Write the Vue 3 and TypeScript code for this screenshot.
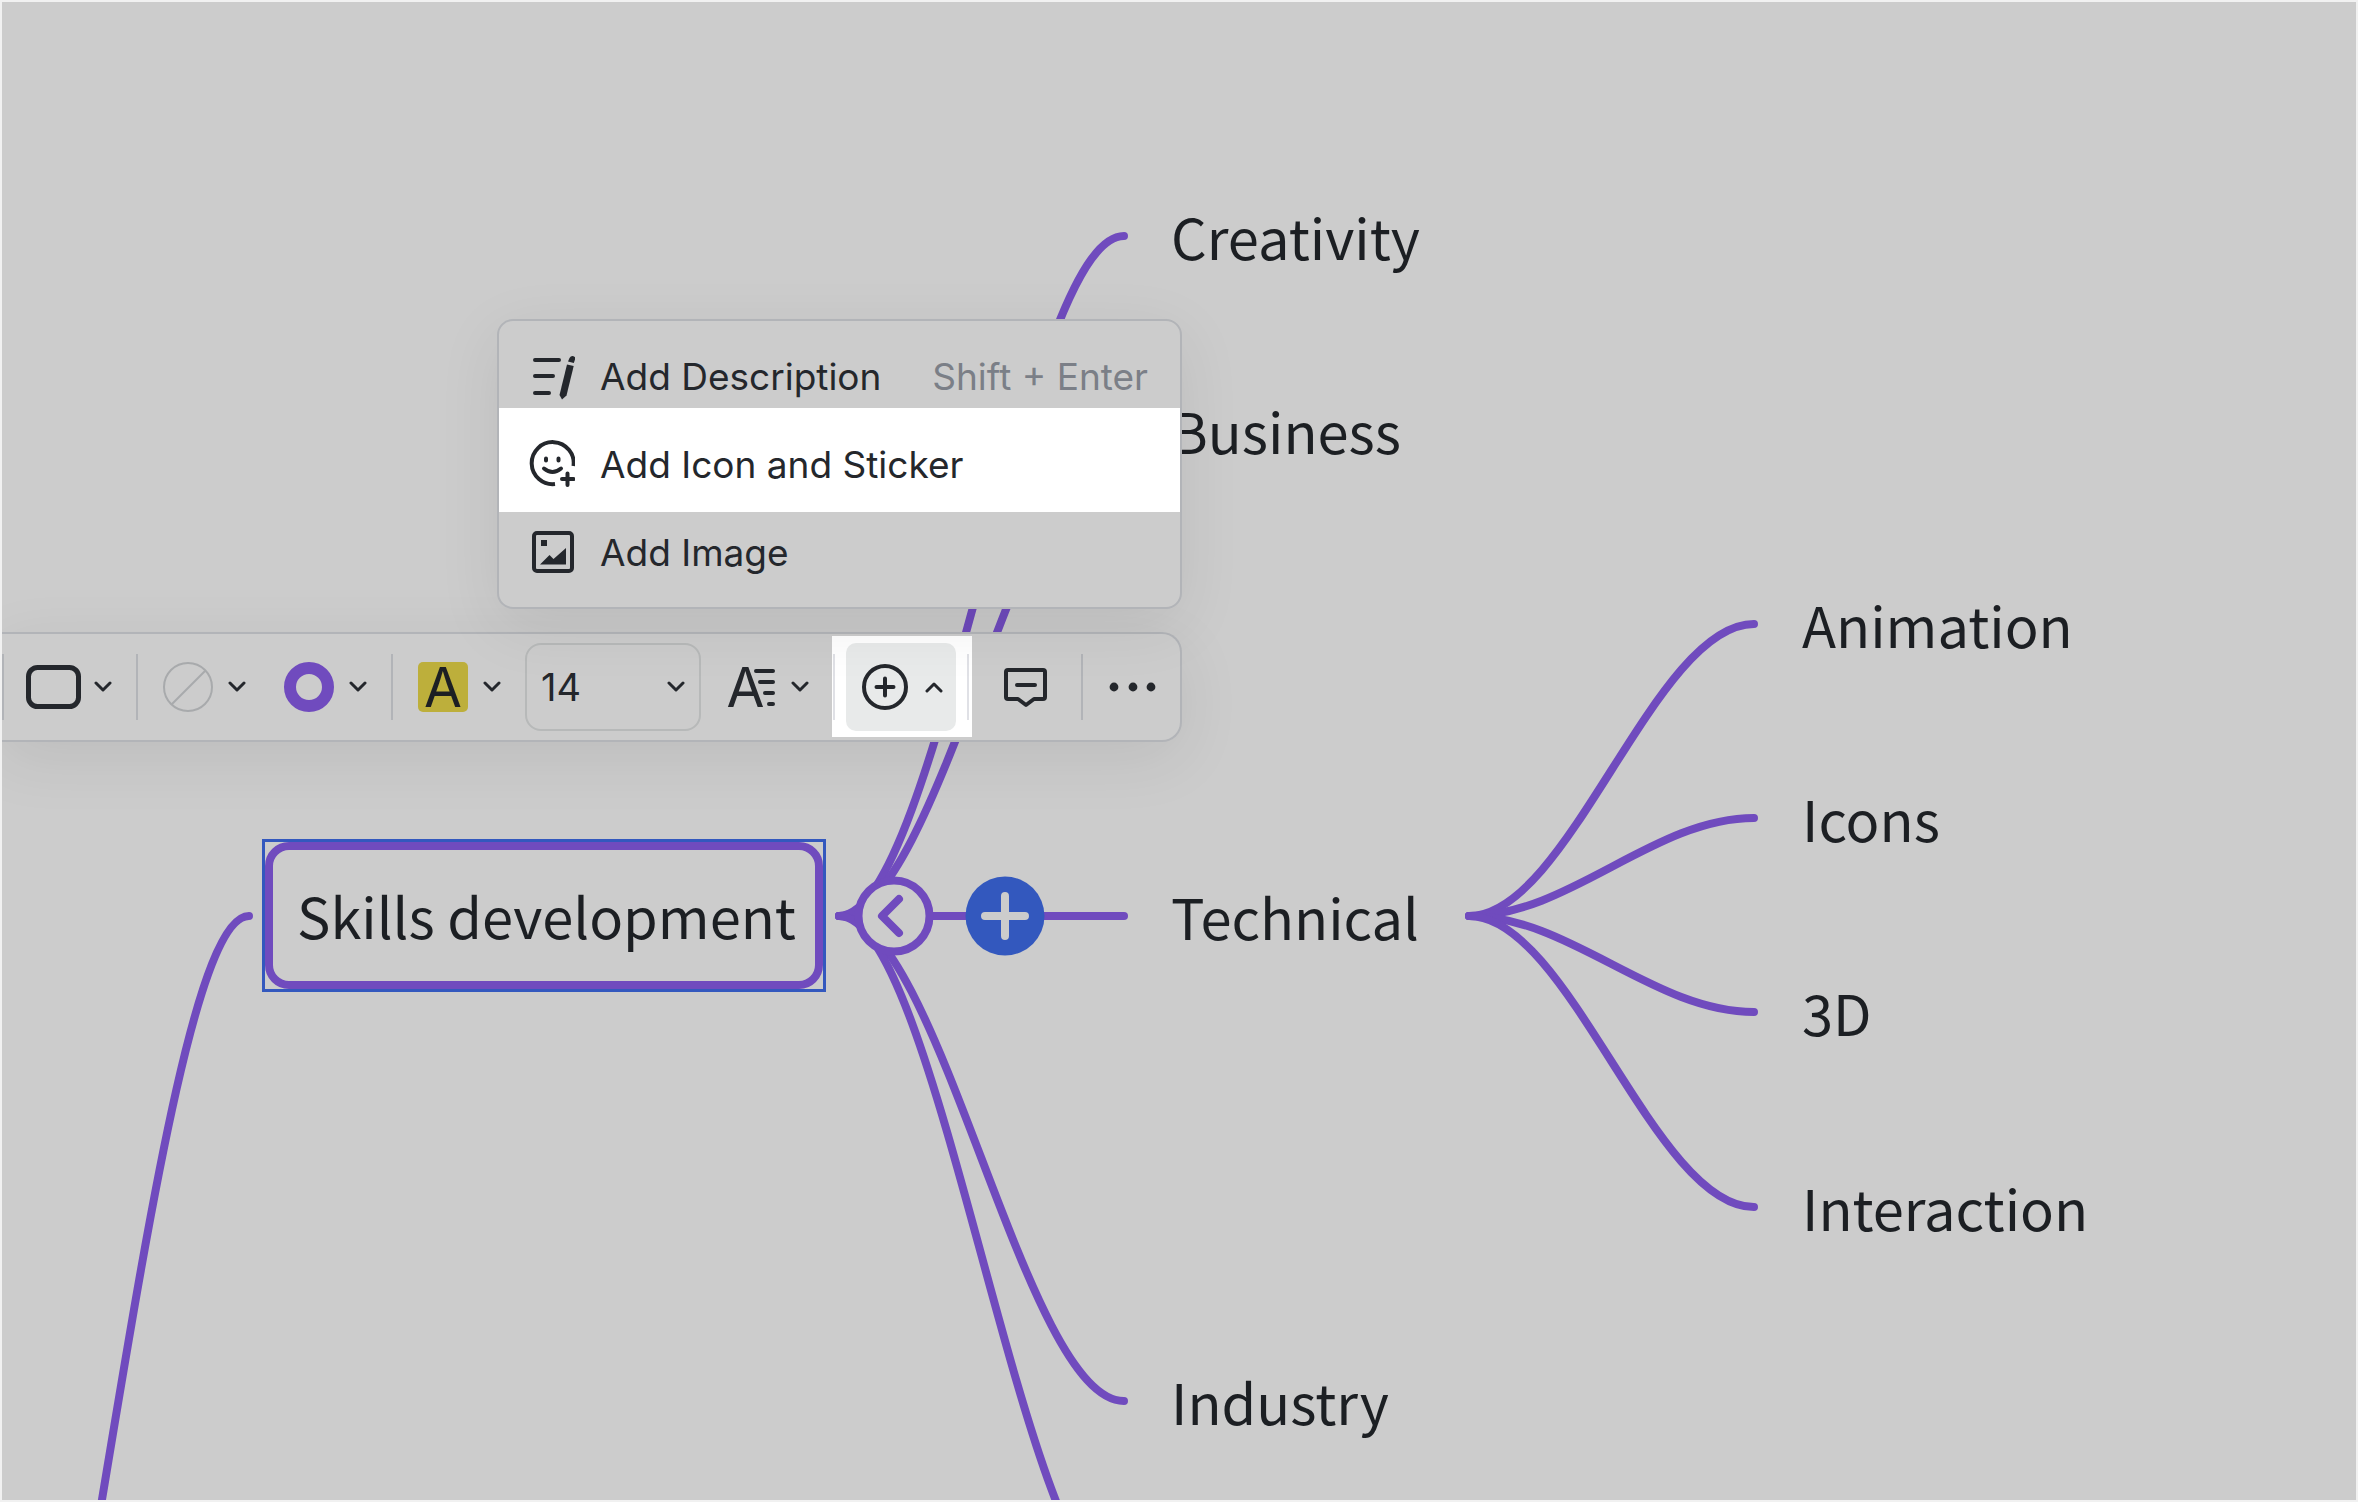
<script setup lang="ts">
import { ref } from 'vue'

interface Topic {
  label: string
  x: number
  y: number
}

interface Link {
  from: [number, number]
  to: [number, number]
}

const topics: Topic[] = [
  { label: 'Creativity', x: 1171, y: 236 },
  { label: 'Business', x: 1171, y: 430 },
  { label: 'Technical', x: 1171, y: 916 },
  { label: 'Industry', x: 1171, y: 1401 },
  { label: 'Animation', x: 1802, y: 624 },
  { label: 'Icons', x: 1802, y: 818 },
  { label: '3D', x: 1802, y: 1012 },
  { label: 'Interaction', x: 1802, y: 1207 },
]

const links: Link[] = [
  { from: [-36, 2029], to: [249, 916] },
  { from: [839, 916], to: [1124, 236] },
  { from: [839, 916], to: [1124, 430] },
  { from: [839, 916], to: [1124, 916] },
  { from: [839, 916], to: [1124, 1401] },
  { from: [839, 916], to: [1124, 1595] },
  { from: [1469, 916], to: [1754, 624] },
  { from: [1469, 916], to: [1754, 818] },
  { from: [1469, 916], to: [1754, 1012] },
  { from: [1469, 916], to: [1754, 1207] },
]

function curve({ from, to }: Link): string {
  const bend = Math.round((to[0] - from[0]) * 0.35)
  return `M${from[0]} ${from[1]}C${from[0] + bend} ${from[1]} ${to[0] - bend} ${to[1]} ${to[0]} ${to[1]}`
}

const fontSize = ref('14')
</script>

<template>
  <main class="canvas">
    <svg class="links" aria-hidden="true">
      <path v-for="(link, i) in links" :key="i" :d="curve(link)" />
    </svg>

    <div
      v-for="topic in topics"
      :key="topic.label"
      class="topic"
      :style="{ left: topic.x + 'px', top: topic.y + 'px' }"
    >
      <span>{{ topic.label }}</span>
    </div>

    <div class="selected"><div class="root">Skills development</div></div>

    <button class="round collapse" aria-label="Collapse branch">
      <svg width="80" height="80" viewBox="0 0 80 80">
        <circle cx="40" cy="40" r="35.5" />
        <path d="M45 23 28 40l17 17" />
      </svg>
    </button>
    <button class="round add" aria-label="Add topic">
      <svg width="80" height="80" viewBox="0 0 80 80">
        <circle cx="40" cy="40" r="39.5" />
        <path d="M20 40h40M40 20v40" />
      </svg>
    </button>

    <div class="toolbar" role="toolbar" aria-label="Topic style">
      <i class="divider"></i>
      <button class="tool" aria-label="Shape">
        <svg class="icon" viewBox="0 0 56 50"><rect x="2.5" y="5.500" width="50" height="39" rx="9" stroke-width="5" /></svg>
        <svg class="chevron" viewBox="0 0 18 12"><path d="m2 2 7 7 7-7" /></svg>
      </button>
      <i class="divider"></i>
      <button class="tool" aria-label="Fill">
        <svg class="icon faint" viewBox="0 0 56 50"><circle cx="28" cy="25" r="24" /><path d="M12 42 45 9" /></svg>
        <svg class="chevron" viewBox="0 0 18 12"><path d="m2 2 7 7 7-7" /></svg>
      </button>
      <button class="tool" aria-label="Border colour">
        <svg class="icon violet" viewBox="0 0 56 50"><circle cx="28" cy="25" r="19" /></svg>
        <svg class="chevron" viewBox="0 0 18 12"><path d="m2 2 7 7 7-7" /></svg>
      </button>
      <i class="divider"></i>
      <button class="tool" aria-label="Text colour">
        <span class="icon"><span class="swatch">A</span></span>
        <svg class="chevron" viewBox="0 0 18 12"><path d="m2 2 7 7 7-7" /></svg>
      </button>
      <label class="size">
        <select v-model="fontSize" aria-label="Font size">
          <option>12</option>
          <option>14</option>
          <option>16</option>
        </select>
        <svg class="chevron" viewBox="0 0 18 12"><path d="m2 2 7 7 7-7" /></svg>
      </label>
      <button class="tool" aria-label="Text format">
        <span class="icon format">
          <span class="letter">A</span>
          <svg width="22" height="38" viewBox="0 0 22 38"><path d="M3 3h17M7 14h13M12 25h8M16 36h4" /></svg>
        </span>
        <svg class="chevron" viewBox="0 0 18 12"><path d="m2 2 7 7 7-7" /></svg>
      </button>
      <div class="insert">
        <i class="divider"></i>
        <button class="tool open" aria-label="Insert" aria-expanded="true">
          <svg class="icon" viewBox="0 0 56 50"><circle cx="28" cy="25" r="21" /><path d="M19.500 25h17M28 16.500v17" /></svg>
          <svg class="chevron" viewBox="0 0 18 12"><path d="m2 10 7-7 7 7" /></svg>
        </button>
        <i class="divider"></i>
      </div>
      <button class="tool wide" aria-label="Comment">
        <svg class="icon" viewBox="0 0 56 50">
          <path d="M11 8h35a2 2 0 0 1 2 2v25a2 2 0 0 1-2 2h-9l-8 6-8-6h-10a2 2 0 0 1-2-2V10a2 2 0 0 1 2-2zM20 23h18" />
        </svg>
      </button>
      <i class="divider"></i>
      <button class="tool last" aria-label="More">
        <svg class="icon dots" viewBox="0 0 56 50">
          <circle cx="9" cy="25" r="4.4" /><circle cx="28" cy="25" r="4.4" /><circle cx="46" cy="25" r="4.4" />
        </svg>
      </button>
    </div>

    <div class="menu" role="menu">
      <button class="item" role="menuitem">
        <svg width="48" height="48" viewBox="0 0 48 48">
          <path d="M8 8h24M8 24h18M8 41h14" />
          <path class="solid" d="M40 12.500 46.700 14 39.500 43.500 35 47.500 32.500 43z" />
          <path class="solid" d="M41 9.500 42.500 6q1.500-2.500 4-1.800t1.500 3.300L46.800 11z" />
        </svg>
        <span>Add Description</span>
        <kbd>Shift + Enter</kbd>
      </button>
      <button class="item spotlit" role="menuitem">
        <svg width="48" height="48" viewBox="0 0 48 48">
          <path class="butt" d="M46.500 26A21 21 0 1 0 28 44" />
          <path d="M40.500 33.500v11.500M35 39h11.500" />
          <path d="M19 18.500v2M31.500 18.500v2M17 28.500q8.500 7 17 0" />
        </svg>
        <span>Add Icon and Sticker</span>
      </button>
      <button class="item" role="menuitem">
        <svg width="48" height="48" viewBox="0 0 48 48">
          <rect x="7" y="5" width="38" height="38" rx="3" />
          <path class="solid" d="M14 12h6v6h-6zM13 36.500l9.500-9.500 4 4L39 20v16.500z" />
        </svg>
        <span>Add Image</span>
      </button>
    </div>
  </main>
</template>

<style>
body {
  margin: 0;
}
</style>

<style scoped>
.canvas {
  --ground: #cccccc;
  --ink: #24272c;
  --violet: #704bbe;
  --blue: #3358be;
  --edge: #b2b4b8;
  position: relative;
  min-height: 100vh;
  overflow: hidden;
  background: var(--ground);
  font-family: Inter, "Liberation Sans", sans-serif;
  font-size: 37px;
  color: var(--ink);
}

.canvas::after {
  content: "";
  position: absolute;
  inset: 0;
  border: 2px solid #f1f1f1;
  pointer-events: none;
}

button {
  margin: 0;
  padding: 0;
  border: 0;
  background: none;
  color: inherit;
  font: inherit;
}

svg {
  display: block;
  flex: none;
  fill: none;
  stroke: currentColor;
  stroke-width: 4;
  stroke-linecap: round;
  stroke-linejoin: round;
}

.links {
  position: absolute;
  inset: 0;
  width: 100%;
  height: 100%;
  stroke: var(--violet);
  stroke-width: 8;
}

.topic,
.root {
  font-family: "Noto Sans CJK SC", sans-serif;
  font-size: 56px;
  line-height: 80px;
  color: #1c1f23;
  white-space: nowrap;
}

.topic {
  position: absolute;
  display: flex;
  align-items: center;
  height: 0;
}

.selected {
  position: absolute;
  left: 262px;
  top: 839px;
  border: 3px solid var(--blue);
}

.root {
  padding: 25px 19px 26px 24px;
  border: 8px solid var(--violet);
  border-radius: 24px;
}

.round {
  position: absolute;
  top: 876px;
}

.collapse {
  left: 854px;
}

.collapse svg {
  stroke: var(--violet);
  stroke-width: 8;
}

.collapse circle {
  fill: var(--ground);
}

.add {
  left: 965px;
}

.add svg {
  stroke: var(--ground);
  stroke-width: 8;
}

.add circle {
  fill: var(--blue);
  stroke: none;
}

.toolbar {
  position: absolute;
  left: 0;
  top: 632px;
  display: flex;
  align-items: center;
  gap: 11px;
  height: 106px;
  padding: 0 8px 0 2px;
  border: 2px solid var(--edge);
  border-left: 0;
  border-radius: 0 20px 20px 0;
  background: var(--ground);
  box-shadow: 0 16px 64px rgba(0, 0, 0, 0.08);
}

.divider {
  flex: none;
  width: 2px;
  height: 66px;
  background: var(--edge);
}

.tool {
  display: flex;
  align-items: center;
  gap: 12px;
  height: 88px;
  padding: 0 13px 0 11px;
}

.icon {
  display: block;
  flex: none;
  width: 56px;
  height: 50px;
}

.chevron {
  width: 18px;
  height: 12px;
  stroke-width: 3;
}

.faint {
  stroke: #a8aaac;
  stroke-width: 2;
}

.violet {
  stroke: var(--violet);
  stroke-width: 12;
}

.swatch {
  display: block;
  width: 50px;
  margin: 0 auto;
  border-radius: 5px;
  background: #bdaf3b;
  color: #1c1f23;
  font-size: 55px;
  line-height: 50px;
  text-align: center;
}

.format {
  display: flex;
  align-items: center;
  justify-content: center;
}

.letter {
  margin-right: -11px;
  font-size: 55px;
  line-height: 50px;
}

.size {
  position: relative;
  display: flex;
  align-items: center;
}

.size select {
  box-sizing: border-box;
  width: 176px;
  height: 88px;
  padding: 0 0 0 14px;
  border: 2px solid #b7b9b9;
  border-radius: 16px;
  appearance: none;
  background: none;
  color: inherit;
  font: inherit;
  font-size: 38px;
}

.size .chevron {
  position: absolute;
  right: 16px;
  pointer-events: none;
}

.insert {
  position: relative;
  z-index: 0;
  display: flex;
  align-items: center;
  gap: 11px;
}

.insert::before {
  content: "";
  position: absolute;
  z-index: -1;
  inset: -7px -3px -6px -1px;
  background: #ffffff;
}

.insert .divider {
  background: #e0e1e6;
}

.open {
  border-radius: 10px;
  background: #e8eaea;
}

.wide {
  padding: 0 17px;
}

.last {
  padding: 0 11px;
}

.dots {
  fill: currentColor;
  stroke: none;
}

.menu {
  position: absolute;
  left: 497px;
  top: 319px;
  display: flex;
  flex-direction: column;
  box-sizing: border-box;
  width: 685px;
  padding: 11px 0;
  border: 2px solid var(--edge);
  border-radius: 16px;
  background: var(--ground);
  box-shadow: 0 16px 64px rgba(0, 0, 0, 0.08);
}

.item {
  position: relative;
  z-index: 0;
  display: flex;
  align-items: center;
  height: 88px;
  padding: 0 32px 0 28px;
  text-align: left;
  white-space: nowrap;
}

.item span {
  margin-left: 25px;
}

.item kbd {
  margin-left: auto;
  color: #7b7f87;
  font: inherit;
}

.spotlit::before {
  content: "";
  position: absolute;
  z-index: -1;
  inset: -12px 0 -4px;
  background: #ffffff;
}

.solid {
  fill: currentColor;
  stroke: none;
}

.butt {
  stroke-linecap: butt;
}
</style>
